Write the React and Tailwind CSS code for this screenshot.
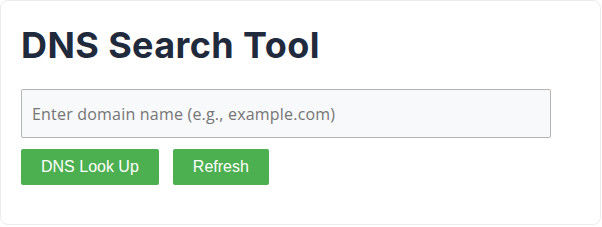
export default function App() {
  return (
    <div className="w-[602px] h-[227px] bg-white">
      <div className="w-[601px] h-[225px] border border-[#ececec] rounded-lg bg-white px-5 pt-[22px]">
        <h1 className="text-[36px] leading-[44px] font-bold text-[#1f2a3c] font-['Inter',sans-serif] tracking-[0.4px]">
          DNS Search Tool
        </h1>
        <input
          type="text"
          placeholder="Enter domain name (e.g., example.com)"
          className="mt-[22px] block w-[530px] h-[49px] px-[10px] bg-[#f8f9fa] border border-[#b5b5b5] rounded-[2px] text-[16px] tracking-[0.2px] text-[#333] placeholder:text-[#757575] font-['Open_Sans',sans-serif] focus:outline-none"
        />
        <div className="mt-[11px] flex gap-[14px]">
          <button className="h-9 px-5 bg-[#4caf50] text-white text-[16px] rounded-[2px] font-['Liberation_Sans',Arial,sans-serif]">
            DNS Look Up
          </button>
          <button className="h-9 px-5 bg-[#4caf50] text-white text-[16px] rounded-[2px] font-['Liberation_Sans',Arial,sans-serif]">
            Refresh
          </button>
        </div>
      </div>
    </div>
  );
}
